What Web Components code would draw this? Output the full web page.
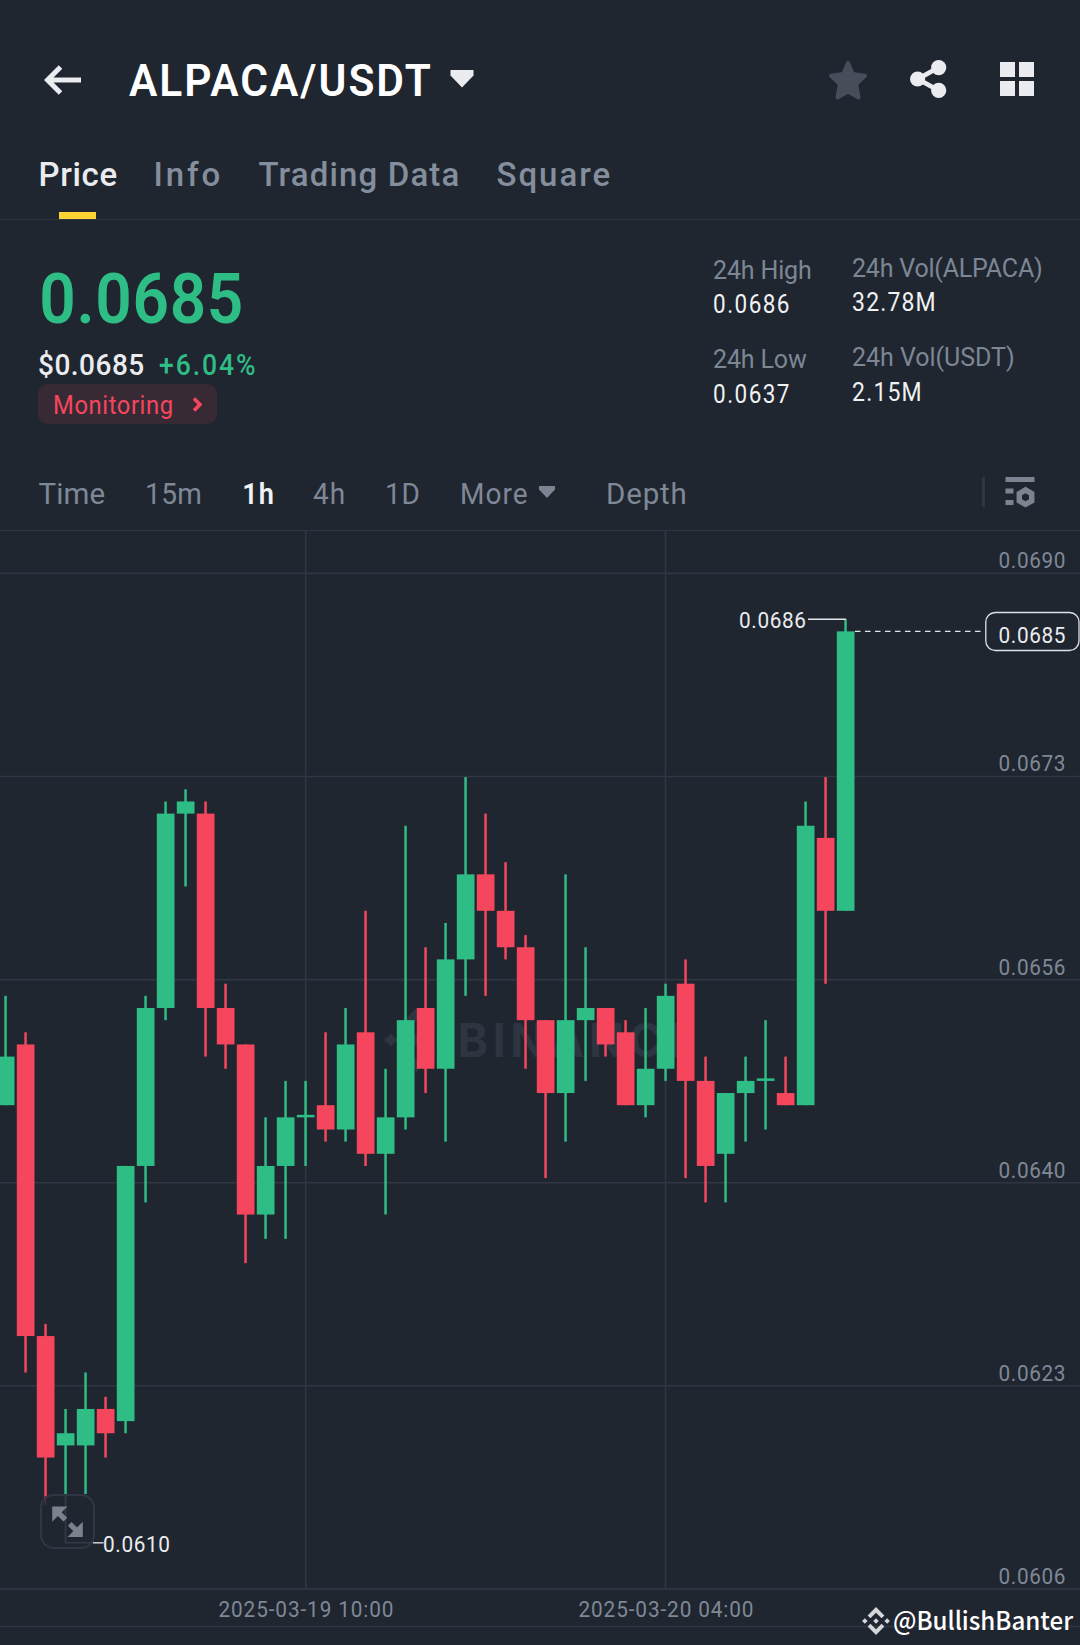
<!DOCTYPE html>
<html lang="en">
<head>
<meta charset="utf-8">
<title>ALPACA/USDT</title>
<style>
  html, body { margin: 0; background: #1f2630; }
  body { width: 1080px; height: 1645px; overflow: hidden; font-family: Roboto, "Noto Sans", sans-serif; color: #eaecef; }
</style>
</head>
<body>
<trade-page></trade-page>
<script>
const define = (name, html, setup) => customElements.define(name, class extends HTMLElement {
  constructor() {
    super();
    this.attachShadow({ mode: 'open' }).innerHTML = html;
  }
  connectedCallback() { if (setup) setup.call(this, this.shadowRoot); }
});

/* One line of text whose box is its cap height tall and exactly `w` wide. */
const ruler = document.createElement('canvas').getContext('2d');
define('fit-text', `
<style>
  :host { display: block; flex: none; white-space: nowrap; }
  span { display: inline-block; transform-origin: 0 50%; vertical-align: top; }
</style><span><slot></slot></span>`, function (root) {
  const size = +this.getAttribute('size'), w = +this.getAttribute('w');
  const weight = this.getAttribute('weight') || 400, sx = +(this.getAttribute('sx') || 1);
  const text = this.textContent, cap = size * 0.711;
  ruler.font = `${weight} ${size}px Roboto`;
  const m = ruler.measureText(text);
  const ink = m.actualBoundingBoxRight + m.actualBoundingBoxLeft;
  this.style.cssText += `width:${w}px;height:${cap}px;font:${weight} ${size}px/${cap}px Roboto,"Noto Sans",sans-serif;`;
  const span = root.querySelector('span');
  span.style.letterSpacing = (w / sx - ink) / (text.length - 1) + 'px';
  span.style.transform = `translate(${m.actualBoundingBoxLeft * sx}px, ${size * 0.014 + 0.5}px) scaleX(${sx})`;
});

define('page-header', `
<style>
  :host { display: flex; align-items: center; height: 161px; box-sizing: border-box; padding: 0 46px 0 44px; }
  svg { display: block; flex: none; }
  .title { margin-left: 48px; color: #fff; }
  .caret { margin: 0 auto 3px 20px; }
  .star { margin-right: 43px; } .share { margin: 0 53px 3px 0; } .grid { margin-bottom: 3px; } .back { margin-bottom: 2px; }
</style>
<svg class="back" width="37" height="30" viewBox="0 0 37 30"><path d="M37 15H4M16.500 2L3.500 15l13 13" fill="none" stroke="#eaecef" stroke-width="5"/></svg>
<fit-text class="title" size="43.800" weight="600" w="301" sx="0.970">ALPACA/USDT</fit-text>
<svg class="caret" width="24" height="18" viewBox="0 0 24 18"><path d="M.5 0h23v5.500L12 17.500 .5 5.500z" fill="#eaecef"/></svg>
<svg class="star" width="38" height="39" viewBox="0 0 38 39"><path d="M19 2l4.700 11 12.300 1.700-8.800 8.300 2.300 13.500L19 30.500 8.500 36.500l2.300-13.500L2 14.700 14.300 13z" fill="#474d5a" stroke="#474d5a" stroke-width="4" stroke-linejoin="round"/></svg>
<svg class="share" width="37" height="38" viewBox="0 0 37 38"><g fill="#eaecef"><circle cx="7.600" cy="19" r="7.600"/><circle cx="28.700" cy="7.600" r="7.600"/><circle cx="28.700" cy="30.400" r="7.600"/></g><path d="M28.500 7.500L8 19l20.500 11.500" fill="none" stroke="#eaecef" stroke-width="4.800"/></svg>
<svg class="grid" width="34" height="34" viewBox="0 0 34 34"><path d="M0 0h15v15H0zM19 0h15v15H19zM0 19h15v15H0zM19 19h15v15H19z" fill="#eaecef"/></svg>`);

define('page-tab', `
<style>
  :host { display: flex; flex-direction: column; justify-content: space-between; color: #848e9c; }
  :host([active]) { color: #eaecef; }
  i { display: none; width: 37px; height: 7.500px; margin-left: 18px; background: #fcd535; }
  :host([active]) i { display: block; }
</style><slot></slot><i></i>`);

define('page-tabs', `
<style>
  :host { display: flex; height: 59px; box-sizing: border-box; padding: 1px 0 0 40.500px; gap: 39px; border-bottom: 1px solid #303742; }
</style>
<page-tab active><fit-text size="33" weight="500" w="76">Price</fit-text></page-tab>
<page-tab><fit-text size="33" weight="500" w="64">Info</fit-text></page-tab>
<page-tab><fit-text size="33" weight="500" w="200">Trading Data</fit-text></page-tab>
<page-tab><fit-text size="33" weight="500" w="112">Square</fit-text></page-tab>`);

define('stat-item', `
<style>
  :host { display: flex; flex-direction: column; gap: 17.200px; }
  .label { color: #7d8694; } .value { color: #f0f1f3; }
</style>
<div class="label"><slot name="label"></slot></div><div class="value"><slot></slot></div>`);

define('price-panel', `
<style>
  :host { display: flex; height: 233px; box-sizing: border-box; padding: 40px 0 0 38px; }
  .left { display: flex; flex-direction: column; align-items: flex-start; width: 676px; padding-top: 13px; }
  .price { color: #2ebd85; margin-left: 4px; }
  .sub { display: flex; gap: 15px; margin: 31px 0 0 1px; }
  .up { color: #2ebd85; }
  .pill { display: flex; align-items: center; width: 179px; height: 40px; box-sizing: border-box; padding: 0 15px 0 17px; margin-top: 9px; justify-content: space-between; border-radius: 10px; background: #382a35; color: #f6465d; }
  .pill svg { margin-top: 1px; }
  .col { display: flex; flex-direction: column; gap: 37.200px; padding-top: .5px; }
  .a { width: 139px; } .b { margin-top: -2px; }
</style>
<div class="left">
  <fit-text class="price" size="71" weight="600" w="199" sx="0.900">0.0685</fit-text>
  <div class="sub">
    <fit-text size="29.500" weight="500" w="104.500" sx="0.950">$0.0685</fit-text>
    <fit-text class="up" size="29.500" weight="500" w="96" sx="0.900">+6.04%</fit-text>
  </div>
  <div class="pill"><fit-text size="25" w="117" sx="0.950">Monitoring</fit-text>
    <svg width="10" height="15" viewBox="0 0 10 15"><path d="M2 1.500l6 6-6 6" fill="none" stroke="#f6465d" stroke-width="3.600"/></svg></div>
</div>
<div class="col a">
  <stat-item><fit-text slot="label" size="25" w="97">24h High</fit-text><fit-text size="25" w="74.500" sx="0.900">0.0686</fit-text></stat-item>
  <stat-item><fit-text slot="label" size="25" w="93">24h Low</fit-text><fit-text size="25" w="74.500" sx="0.900">0.0637</fit-text></stat-item>
</div>
<div class="col b">
  <stat-item><fit-text slot="label" size="25" w="188">24h Vol(ALPACA)</fit-text><fit-text size="25" w="81" sx="0.920">32.78M</fit-text></stat-item>
  <stat-item><fit-text slot="label" size="25" w="160">24h Vol(USDT)</fit-text><fit-text size="25" w="67" sx="0.920">2.15M</fit-text></stat-item>
</div>`);

define('interval-bar', `
<style>
  :host { display: flex; height: 78px; box-sizing: border-box; padding: 30px 0 0 38.500px; color: #7f8896; border-bottom: 1px solid #303742; }
  .on { color: #f0f1f3; }
  .caret { margin: 3px 53px 0 12px; }
  i { width: 3px; height: 30px; margin: -6px 20px 0 auto; background: #303742; }
  .set { margin: -6px 45px 0 0; }
</style>
<fit-text size="29.500" w="66">Time</fit-text>
<fit-text style="margin-left:42.500px" size="29.500" w="53" sx="0.950">15m</fit-text>
<fit-text style="margin-left:43.500px" class="on" size="29.500" weight="600" w="28.500" sx="0.920">1h</fit-text>
<fit-text style="margin-left:41px" size="29.500" w="31" sx="0.950">4h</fit-text>
<fit-text style="margin-left:43px" size="29.500" w="31.500" sx="0.950">1D</fit-text>
<fit-text style="margin-left:43.500px" size="29.500" w="65" sx="0.950">More</fit-text>
<svg class="caret" width="16" height="12" viewBox="0 0 16 12"><path d="M0 0h16v3.500L8 12 0 3.500z" fill="#7d8491"/></svg>
<fit-text size="29.500" w="77.500">Depth</fit-text>
<i></i>
<svg class="set" width="30" height="31" viewBox="0 0 30 31"><path d="M.5 0h29v5H.5zM.5 11.500h8v5h-8zM.5 23h8v5h-8z" fill="#7d8491"/><path d="M20.500 13l6.200 3.500v7.300l-6.200 3.500-6.200-3.500v-7.300z" fill="none" stroke="#7d8491" stroke-width="5.500"/></svg>`);

/* Candles as [direction, high, top, bottom, low]; levels are ticks of 0.0001 below 0.0686. */
const CANDLES = [
  [1,31,36,40,40],[-1,34,35,59,62],[-1,58,59,69,72.8],[1,65,67,68,72],[1,62,65,68,72],[-1,64,65,67,69],
  [1,45,45,66,67],[1,31,32,45,48],[1,15,16,32,33],[1,14,15,16,22],[-1,15,16,32,36],[-1,30,32,35,37],
  [-1,35,35,49,53],[1,41,45,49,51],[1,38,41,45,51],[1,38,41,41,45],[-1,34,40,42,43],[1,32,35,42,43],
  [-1,24,34,44,45],[1,37,41,44,49],[1,17,33,41,42],[-1,27,32,37,39],[1,25,28,37,43],[1,13,21,28,31],
  [-1,16,21,24,31],[-1,20,24,27,28],[-1,26,27,33,37],[-1,33,33,39,46],[1,21,33,39,43],[1,27,32,33,38],
  [-1,32,32,35,36],[-1,33,34,40,40],[1,32,37,40,41],[1,30,31,37,38],[-1,28,30,38,46],[-1,36,38,45,48],
  [1,39,39,44,48],[1,36,38,39,43],[1,33,38,38,42],[-1,36,39,40,40],[1,15,17,40,40],[-1,13,18,24,30],[1,0,1,24,24]
];
const LOGO = 'M-6 0L0-6 6 0 0 6zM-30 0l6-6 6 6-6 6zM18 0l6-6 6 6-6 6zM0-30l18 18-6 6L0-18-12-6l-6-6zM0 30l18-18-6-6L0 18-12 6l-6 6z';

define('candle-chart', `
<style>
  :host { display: block; height: 1114px; }
  svg { display: block; font-family: Roboto, "Noto Sans", sans-serif; font-size: 22.600px; }
  .axis { fill: #7f8896; } .lit { fill: #eaecef; }
  .mark { font-family: Inter, Roboto, sans-serif; font-weight: 700; font-size: 46px; fill: #2d3540; }
  .by { font: 500 25px "Noto Sans CJK SC", "Noto Sans", sans-serif; fill: #fff; }
</style>
<svg width="1080" height="1114" viewBox="0 531 1080 1114">
  <g id="grid" stroke="#303742" stroke-width="1.600"></g>
  <path transform="translate(416.500 1040) scale(1.070)" d="${LOGO}" fill="#2d3540"/>
  <text class="mark" x="457.500" y="1056.500" textLength="238">BINANCE</text>
  <g id="candles"></g>
  <g id="labels"></g>
  <path d="M808 619.300h38" stroke="#e3e5e8" stroke-width="1.500"/>
  <path d="M855 631.400h130" stroke="#e3e5e8" stroke-width="1.300" stroke-dasharray="5.500 4.500"/>
  <rect x="985.800" y="612.500" width="93.200" height="38" rx="9.500" fill="#1f2630" stroke="#dfe1e5" stroke-width="1.300"/>
  <rect x="41" y="1495" width="53" height="53" rx="13" fill="#1f2630" stroke="#2f3742" stroke-width="2"/>
  <path d="M65.500 1496v46.700H93" fill="none" stroke="#323a45" stroke-width="1.800"/>
  <path d="M45.500 1496v9" stroke="#4b2f3c" stroke-width="1.500"/>
  <path d="M93 1542.800h10.500" stroke="#cfd2d7" stroke-width="1.500"/>
  <path d="M52.200 1506.500h15.300l-15.300 15.300zM82.800 1537h-15.300l15.300-15.300z" fill="#7b828f"/>
  <path d="M56 1510.300l9.300 9.300M79 1533.200l-9.300-9.300" stroke="#7b828f" stroke-width="5.200"/>
  <path transform="translate(876 1621) scale(.465)" d="${LOGO}" fill="#d5d6d9"/>
  <text class="by" x="893" y="1629.900" textLength="180" lengthAdjust="spacingAndGlyphs">@BullishBanter</text>
</svg>`, function (root) {
  const rows = [573.4, 776.5, 979.6, 1182.7, 1385.8, 1588.9];
  root.getElementById('grid').innerHTML =
    [...rows, 1626.5].map(y => `<path d="M0 ${y}H1080"/>`).join('') +
    [305.7, 665.5].map(x => `<path d="M${x} 530V1589"/>`).join('');
  const y = n => 619.2 + n * 12.15;
  root.getElementById('candles').innerHTML = CANDLES.map(([dir, hi, top, bot, lo], i) => {
    const cx = 5.6 + i * 20, flat = top === bot;
    const t = flat ? y(top) - 2.5 : y(top), h = flat ? 2.5 : y(bot) - y(top);
    return `<g fill="${dir > 0 ? '#2ebd85' : '#f6465d'}"><rect x="${cx - 1.3}" y="${y(hi)}" width="2.500" height="${y(lo) - y(hi)}"/>` +
      `<rect x="${cx - 8.8}" y="${t}" width="17.700" height="${h}"/></g>`;
  }).join('');
  const label = (x, yy, w, cls, s) => {
    const sx = 0.92;
    return `<text class="${cls}" transform="translate(${x} ${yy}) scale(${sx} 1)" textLength="${w / sx}">${s}</text>`;
  };
  root.getElementById('labels').innerHTML =
    ['0.0690', '0.0673', '0.0656', '0.0640', '0.0623', '0.0606'].map((s, i) => label(998.5, rows[i] - 5.1, 67, 'axis', s)).join('') +
    label(218.5, 1616.9, 175, 'axis', '2025-03-19 10:00') + label(578.5, 1616.9, 175, 'axis', '2025-03-20 04:00') +
    label(739, 628, 67, 'lit', '0.0686') + label(103, 1551.8, 67, 'lit', '0.0610');
  const tag = document.createElementNS('http://www.w3.org/2000/svg', 'g');
  tag.innerHTML = label(998.5, 642.7, 67, 'lit', '0.0685');
  root.querySelector('svg').append(tag);
});

define('trade-page', `
<style>:host { display: flex; flex-direction: column; width: 1080px; height: 1645px; overflow: hidden; background: #1f2630; }</style>
<page-header></page-header><page-tabs></page-tabs><price-panel></price-panel><interval-bar></interval-bar><candle-chart></candle-chart>`);
</script>
</body>
</html>
